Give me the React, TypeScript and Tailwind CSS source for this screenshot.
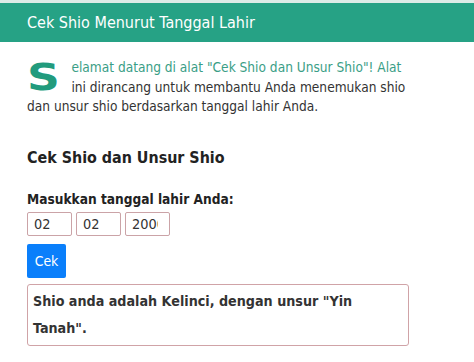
import { useState } from "react";

const DateInput = ({ value }: { value: string }) => {
  const [val, setVal] = useState(value);
  return (
    <input
      type="text"
      value={val}
      onChange={(e) => setVal(e.target.value)}
      className="h-[24px] w-[45px] rounded-[2px] border border-[#cba3a7] pl-[6px] pr-[11px] text-[14.4px] text-[#333] outline-none"
    />
  );
};

export default function App() {
  return (
    <div className="min-h-screen bg-white font-['DejaVu_Sans_Condensed','DejaVu_Sans',sans-serif] text-[#333]">
      <div className="h-[3px] bg-[#dcece7]" />
      <header className="flex h-[39px] items-center bg-[#26a285] px-[27px]">
        <h1 className="text-[16px] text-white">Cek Shio Menurut Tanggal Lahir</h1>
      </header>

      <main className="w-[409px] pl-[27px]">
        <p className="mt-[16px] text-[13.6px] leading-[19.7px] first-line:text-[#3a9e86]">
          <span className="float-left mr-[17px] h-[36px] origin-left scale-x-[1.2] font-['DejaVu_Sans',sans-serif] text-[38px] font-bold leading-[38px] text-[#229b7d]">
            S
          </span>
          elamat datang di alat "Cek Shio dan Unsur Shio"! Alat ini dirancang
          untuk membantu Anda menemukan shio dan unsur shio berdasarkan tanggal
          lahir Anda.
        </p>

        <h2 className="mt-[31px] text-[15.9px] font-bold leading-[20px] text-[#222]">
          Cek Shio dan Unsur Shio
        </h2>

        <label className="mt-[21px] block text-[13.6px] font-bold leading-[20px] text-[#222]">
          Masukkan tanggal lahir Anda:
        </label>

        <div className="mt-[3px] flex gap-[4px]">
          <DateInput value="02" />
          <DateInput value="02" />
          <DateInput value="2000" />
        </div>

        <button className="mt-[8px] flex h-[34px] w-[39px] items-center justify-center rounded-[2px] bg-[#0a7ffb] text-[13.9px] text-white">
          Cek
        </button>

        <div className="mt-[6px] rounded-[3px] border border-[#d0a3a7] px-[5px] py-[3px] text-[14.2px] font-bold leading-[27px] text-[#333]">
          Shio anda adalah Kelinci, dengan unsur "Yin Tanah".
        </div>
      </main>
    </div>
  );
}
